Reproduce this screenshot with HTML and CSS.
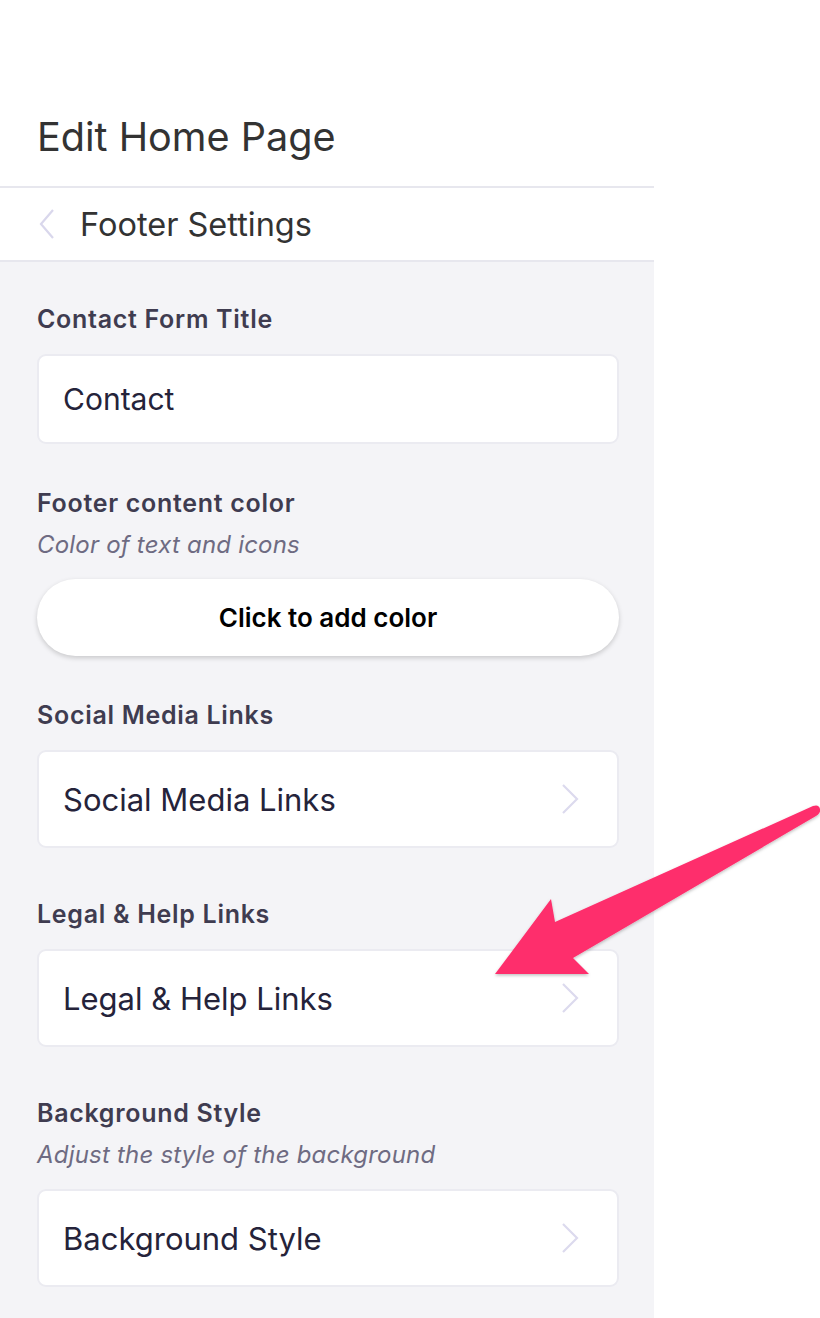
FILE: index.html
```html
<!DOCTYPE html>
<html>
<head>
<title>Edit Home Page</title>
<meta charset="UTF-8">
<meta name="viewport" content="width=device-width, initial-scale=1.0">
<link rel="stylesheet" href="styles.css">
</head>
<body>
<div class="sidebar">
<div class="page-title">
<h1>Edit Home Page</h1>
</div>
<div class="sub-header">
<svg class="back-icon" width="18" height="32" viewBox="0 0 18 32"><path d="M15 2 L3 16 L15 30" fill="none" stroke="#d9d7ec" stroke-width="2.2"/></svg>
<h2>Footer Settings</h2>
</div>
<div class="panel">
<div class="field">
<div class="label">Contact Form Title</div>
<div class="text-input">Contact</div>
</div>
<div class="field">
<div class="label">Footer content color</div>
<div class="hint">Color of text and icons</div>
<button class="color-btn">Click to add color</button>
</div>
<div class="field field-link">
<div class="label">Social Media Links</div>
<div class="link-card">
<span>Social Media Links</span>
<svg class="chev" width="18" height="30" viewBox="0 0 18 30"><path d="M2 1 L16 15 L2 29" fill="none" stroke="#dcdaee" stroke-width="2.2"/></svg>
</div>
</div>
<div class="field field-link">
<div class="label">Legal &amp; Help Links</div>
<div class="link-card">
<span>Legal &amp; Help Links</span>
<svg class="chev" width="18" height="30" viewBox="0 0 18 30"><path d="M2 1 L16 15 L2 29" fill="none" stroke="#dcdaee" stroke-width="2.2"/></svg>
</div>
</div>
<div class="field field-link">
<div class="label">Background Style</div>
<div class="hint">Adjust the style of the background</div>
<div class="link-card">
<span>Background Style</span>
<svg class="chev" width="18" height="30" viewBox="0 0 18 30"><path d="M2 1 L16 15 L2 29" fill="none" stroke="#dcdaee" stroke-width="2.2"/></svg>
</div>
</div>
</div>
</div>
<svg class="arrow" width="820" height="1318" viewBox="0 0 820 1318">
<defs>
<filter id="sh" x="-10%" y="-10%" width="120%" height="130%">
<feDropShadow dx="0" dy="1.5" stdDeviation="1.5" flood-color="#000" flood-opacity="0.25"/>
</filter>
</defs>
<path filter="url(#sh)" fill="#fe2e6c" d="M495 974 L551 899 L555 922 L813 806 Q819 804 820 809 Q821 813 816 816 L573 958 L589 974 Z"/>
</svg>
</body>
</html>
```

FILE: styles.css
```css
body {
    margin: 0;
    font-family: Inter, "Noto Sans", sans-serif;
    background: #fff;
    position: relative;
}
.sidebar {
    width: 654px;
    min-height: 1318px;
    background: #f4f4f7;
}
.page-title {
    background: #fff;
    padding: 114px 37px 26px;
    border-bottom: 2px solid #e7e7ee;
}
.page-title h1 {
    margin: 0;
    font-size: 39.6px;
    line-height: 46px;
    font-weight: 400;
    color: #333;
}
.sub-header {
    background: #fff;
    height: 72px;
    display: flex;
    align-items: center;
    padding-left: 38px;
    border-bottom: 2px solid #e7e7ee;
}
.back-icon {
    margin-right: 24px;
}
.sub-header h2 {
    margin: 0;
    font-size: 32.5px;
    font-weight: 400;
    color: #333;
}
.panel {
    padding: 41px 35px 30px 37px;
}
.field {
    margin-bottom: 43px;
}
.field-link {
    margin-bottom: 50px;
}
.label {
    font-size: 25px;
    line-height: 32px;
    font-weight: 600;
    letter-spacing: 0.7px;
    color: #3f3c50;
    margin-bottom: 19px;
}
.label + .hint {
    margin-top: -9px;
}
.hint {
    font-size: 24px;
    line-height: 32px;
    font-style: italic;
    letter-spacing: 0.2px;
    color: #6e6b82;
    margin-bottom: 18px;
}
.text-input {
    box-sizing: border-box;
    height: 90px;
    background: #fff;
    border: 2px solid #ebebf1;
    border-radius: 9px;
    padding: 0 24px;
    display: flex;
    align-items: center;
    font-size: 30px;
    color: #25233a;
}
.color-btn {
    display: block;
    width: 100%;
    height: 77px;
    border: none;
    border-radius: 40px;
    background: #fff;
    box-shadow: 0 2px 5px rgba(0, 0, 0, 0.18);
    font-family: Inter, "Noto Sans", sans-serif;
    font-size: 26px;
    font-weight: 600;
    color: #000;
}
.link-card {
    box-sizing: border-box;
    height: 98px;
    background: #fff;
    border: 2px solid #ebebf1;
    border-radius: 9px;
    padding: 0 38px 0 24px;
    display: flex;
    align-items: center;
    justify-content: space-between;
    font-size: 31px;
    color: #25233a;
}
.arrow {
    position: absolute;
    left: 0;
    top: 0;
    pointer-events: none;
}
```
